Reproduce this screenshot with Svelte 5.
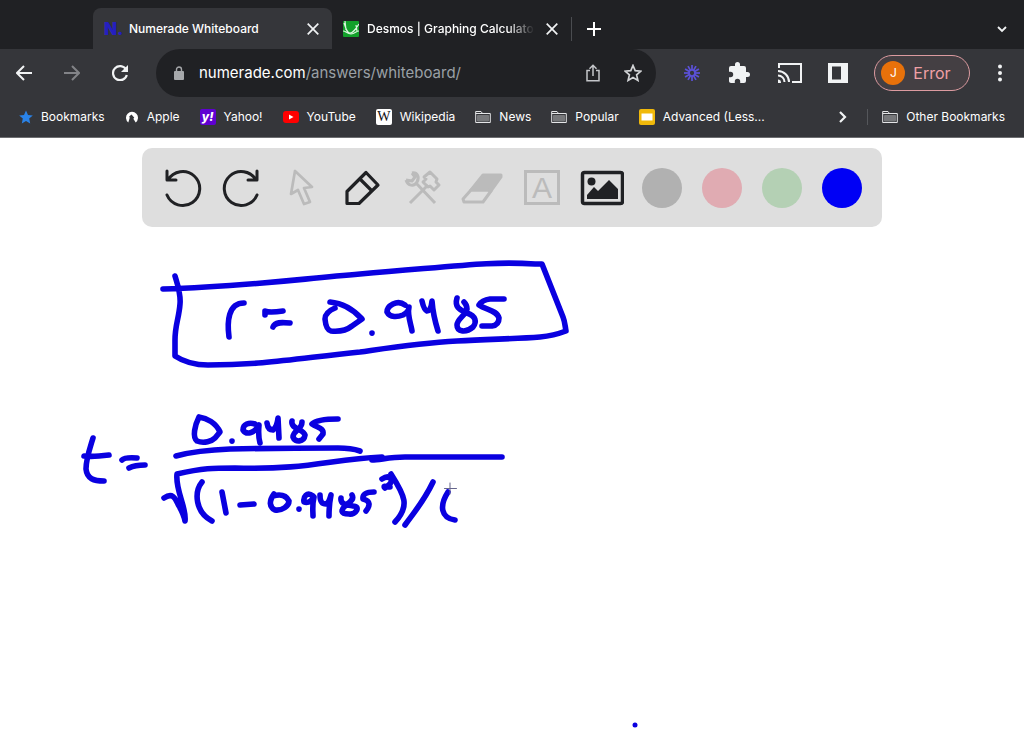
<script lang="ts">
  type Swatch = { name: string, color: string };

  let color = $state("blue");
  let address = $state("numerade.com/answers/whiteboard/");

  const swatches: Swatch[] = [
    { name: "gray", color: "#b1b1b1" },
    { name: "red", color: "#e0abb2" },
    { name: "green", color: "#b4d0b4" },
    { name: "blue", color: "#0000f5" },
  ];

  const bookmarks = [
    { icon: "star", label: "Bookmarks" },
    { icon: "apple", label: "Apple" },
    { icon: "yahoo", label: "Yahoo!" },
    { icon: "youtube", label: "YouTube" },
    { icon: "wiki", label: "Wikipedia" },
    { icon: "folder", label: "News" },
    { icon: "folder", label: "Popular" },
    { icon: "slides", label: "Advanced (Less..." },
  ];

  // pen strokes, in board coordinates
  const result = [
    "M175 276C178 286 181 294 180 304C179 318 175 325 175 340V356C184 362 196 365 208 365C265 365 300 358 360 352C395 347 420 343 457 341C490 339 515 339 540 337C550 336 558 334 566 331C565 326 565 322 563 317L542 264H535C490 261 460 266 360 274C290 280 240 287 163 289",
    "M229 337C227 322 228 303 244 303",
    "M265 315V311Q269 313 283 311",
    "M273 327C275 322 281 322 290 323",
    "M335 308C328 311 325 315 325 319Q326 330 331 331C341 332 347 330 352 326L362 319C352 308 342 303 330 302",
    "M372 333v.1",
    "M405 305C397 299 387 306 387 312C390 318 398 317 403 315C407 313 409 310 409 307C407 315 411 324 412 331",
    "M422 301Q424 310 427 311Q431 311 432 301Q433 315 438 331",
    "M457 298C454 308 461 310 467 313C476 316 477 322 473 327C466 333 457 332 457 325C457 319 466 315 467 309C467 306 466 304 464 302",
    "M504 299H490Q482 300 479 305C486 310 497 310 499 318Q499 325 492 326L482 326",
  ];
  const fraction = [
    "M93 438C90 448 86 459 86 469C87 479 94 481 104 481",
    "M84 456C93 457 101 456 109 455",
    "M122 460Q125 457 137 458",
    "M129 468Q135 465 145 465",
    "M199 417C195 425 192 437 197 441C204 444 212 441 215 438L220 432C216 423 207 418 199 417",
    "M232 441v.1",
    "M255 424C249 422 243 424 243 430C246 435 254 434 259 425Q258 436 260 443",
    "M267 423Q268 430 273 430Q277 427 278 418L279 438",
    "M292 421C290 429 304 429 305 435C304 442 295 443 293 437C293 430 302 430 302 422",
    "M338 419C329 419 316 420 312 424C318 428 324 428 323 434L319 439",
    "M176 456C191 452 205 450 230 449C280 448 320 448 338 448Q351 448 360 451",
    "M164 498C174 491 176 501 179 506Q184 515 185 521C187 508 175 490 177 474C203 468 213 468 235 468C310 470 330 459 382 457",
    "M372 460C380 460 389 457 405 457H502",
    "M202 482C194 492 195 512 212 521",
    "M222 492L226 513",
    "M240 505L254 504",
    "M274 494C269 501 269 507 275 510C282 511 289 506 289 501C286 495 281 494 273 496",
    "M299 509v.1",
    "M313 496C307 491 303 497 304 502C309 504 313 499 314 497C312 505 313 511 313 516",
    "M320 495C320 501 321 504 326 504C329 503 330 498 331 495C329 505 329 511 329 516",
    "M341 498C340 505 348 505 353 506C361 506 356 515 349 514C340 514 341 510 345 506C348 503 355 500 352 495",
    "M374 492Q362 492 363 499C371 501 370 506 366 511",
    "M382 479Q388 475 391 479C393 482 389 485 385 488C382 485 388 487 390 487",
    "M391 474C405 496 410 506 395 522",
    "M433 482C424 501 418 507 405 525",
    "M448 492C439 506 441 518 455 520",
  ];
</script>

<svelte:head>
  <title>Numerade Whiteboard</title>
</svelte:head>

{#snippet folder()}
  <svg width="16" height="14" viewBox="0 0 16 14" fill="none" stroke="#e4e5e7"><path d="M.7 12.5V1.5H6l1.5 2h7.8v9z" /><path d="M2.5 5.5h11V11h-11z" fill="#77787b" stroke="#77787b" /><path d="M.7 3.5H15" /></svg>
{/snippet}

{#snippet close()}
  <svg width="12" height="12" viewBox="0 0 12 12" stroke="#f1f3f4" stroke-width="1.7"><path d="M.7.7l10.6 10.6M11.3.7L.7 11.3" /></svg>
{/snippet}

<div class="window">
  <header>
    <div class="tabs">
      <div class="tab active">
        <span class="logo-n" aria-hidden="true">N.</span>
        <a class="title" href="#board">Numerade Whiteboard</a>
        <button aria-label="Close Numerade Whiteboard">{@render close()}</button>
      </div>
      <div class="tab">
        <svg width="16" height="16" viewBox="0 0 16 16"><rect width="16" height="16" rx="1" fill="#12a02a" /><path d="M1 2C3 8 4 12 7 12S12 9 16 3M2 0l1 9M0 10c3 0 4 3 8 3s5-3 8-3M13 4l1 6" fill="none" stroke="#d9f5dc" stroke-width="1.2" /></svg>
        <a class="title fade" href="#desmos">Desmos | Graphing Calculato</a>
        <button aria-label="Close Desmos">{@render close()}</button>
      </div>
      <button class="new" aria-label="New tab"><svg width="14" height="14" viewBox="0 0 14 14" stroke="#fff" stroke-width="2"><path d="M7 0v14M0 7h14" /></svg></button>
      <button class="search" aria-label="Search tabs"><svg width="10" height="7" viewBox="0 0 10 7" fill="none" stroke="#f1f3f4" stroke-width="1.8"><path d="M1 1l4 4 4-4" /></svg></button>
    </div>

    <div class="toolbar">
      <nav>
        <button aria-label="Back"><svg width="16" height="16" viewBox="0 0 16 16" fill="none" stroke="#f1f3f4" stroke-width="2"><path d="M16 8H1.5M8 1L1 8l7 7" /></svg></button>
        <button aria-label="Forward"><svg width="16" height="16" viewBox="0 0 16 16" fill="none" stroke="#828387" stroke-width="2"><path d="M0 8h14.5M8 1l7 7-7 7" /></svg></button>
        <button aria-label="Reload"><svg width="16" height="16" viewBox="0 0 16 16" fill="none" stroke="#f1f3f4" stroke-width="2.2"><path d="M14 4.5A7 7 0 1 0 14.8 10" /><path d="M16 0v7H9z" fill="#f1f3f4" stroke="none" /></svg></button>
      </nav>

      <div class="omnibox">
        <svg width="12" height="14" viewBox="0 0 12 14"><rect x="1" y="5" width="10" height="9" rx="1" fill="#a6a8ab" /><path d="M3.5 6V3.5a2.5 2.5 0 0 1 5 0V6" fill="none" stroke="#a6a8ab" stroke-width="1.4" /></svg>
        <a class="url" href="#board" aria-label={address}><b>numerade.com</b>/answers/whiteboard/</a>
        <button aria-label="Share"><svg width="14" height="18" viewBox="0 0 14 18" fill="none" stroke="#c4c6c9" stroke-width="1.5"><path d="M4 6.5H1v10.2h12V6.5H10M7 12V1.5M3.5 4.700L7 1.200l3.500 3.500" /></svg></button>
        <button aria-label="Bookmark this page"><svg width="18" height="18" viewBox="0 0 18 18" fill="none" stroke="#d2d4d6" stroke-width="1.7"><path d="M9 1.5l2.2 5.2 5.700.5-4.300 3.700 1.300 5.500L9 13.500l-4.900 2.900 1.300-5.500L1.100 7.200l5.700-.5z" /></svg></button>
      </div>

      <div class="extensions">
        <button aria-label="Loom"><svg width="18" height="18" viewBox="-9 -9 18 18" stroke="#5b51d8" stroke-width="1.7">
          {#each Array(12) as _, i}
            <path d="M0-3V-8" transform="rotate({i * 30})" />
          {/each}
          <circle r="3" fill="none" />
        </svg></button>
        <button aria-label="Extensions"><svg width="24" height="24" viewBox="0 0 24 24" fill="#f1f3f4"><path d="M20.500 11H19V7a2 2 0 0 0-2-2h-4V3.500a2.500 2.500 0 0 0-5 0V5H4a2 2 0 0 0-2 2v3.800h1.500a2.700 2.700 0 0 1 0 5.400H2V20c0 1.100.9 2 2 2h3.800v-1.500a2.700 2.700 0 0 1 5.400 0V22H17a2 2 0 0 0 2-2v-4h1.500a2.500 2.500 0 0 0 0-5z" /></svg></button>
        <button aria-label="Cast"><svg width="26" height="22" viewBox="0 0 26 22" fill="none" stroke="#f1f3f4" stroke-width="2"><path d="M2 6V2h22v18h-9M1 9a11 11 0 0 1 11 11M1 13.500A6.500 6.500 0 0 1 7.500 20" /><path d="M1 17.500A3 3 0 0 1 4 21H1z" fill="#f1f3f4" stroke="none" /></svg></button>
        <button aria-label="Side panel"><svg width="20" height="20" viewBox="0 0 20 20"><path d="M0 0h20v20H0zM4 3.500v13h9v-13z" fill="#f1f3f4" fill-rule="evenodd" /></svg></button>
        <button class="profile"><span>J</span>Error</button>
      </div>
      <button class="menu" aria-label="Menu"><svg width="6" height="18" viewBox="0 0 6 18" fill="#f1f3f4"><circle cx="3" cy="2.500" r="2" /><circle cx="3" cy="9" r="2" /><circle cx="3" cy="15.500" r="2" /></svg></button>
    </div>

    <nav class="bookmarks">
      {#each bookmarks as mark}
        <a href="#{mark.icon}">
          {#if mark.icon === "star"}
            <svg width="14" height="14" viewBox="0 0 14 14" fill="#2a83e8"><path d="M7 .5l2 4.400 4.800.5-3.600 3.200 1 4.800L7 11l-4.200 2.400 1-4.800L.2 5.400 5 4.900z" /></svg>
          {:else if mark.icon === "apple"}
            <svg width="14" height="14" viewBox="0 0 14 14"><path d="M3.300 12.500A6 6 0 1 1 10.700 12.500L8.500 9V7.500L6 6 4.500 8.500z" fill="#fff" /><path d="M5 12.500V8.500L4.200 6.500 6.500 4.500l2.800 3.300-1.300.7L6.500 7.500v5z" fill="#35363a" /></svg>
          {:else if mark.icon === "yahoo"}
            <span class="chip yahoo">y!</span>
          {:else if mark.icon === "youtube"}
            <svg width="16" height="12" viewBox="0 0 16 12"><rect width="16" height="12" rx="3" fill="#f00" /><path d="M6 3.500v5L10.500 6z" fill="#fff" /></svg>
          {:else if mark.icon === "wiki"}
            <span class="chip wiki">W</span>
          {:else if mark.icon === "slides"}
            <svg width="16" height="16" viewBox="0 0 16 16"><rect width="16" height="16" rx="2" fill="#f0b90b" /><path d="M2.500 4.500h11v7h-11z" fill="#fff" /></svg>
          {:else}
            {@render folder()}
          {/if}
          {mark.label}
        </a>
      {/each}
      <button class="more" aria-label="More bookmarks"><svg width="8" height="12" viewBox="0 0 8 12" fill="none" stroke="#f1f3f4" stroke-width="2.200"><path d="M1 1l5 5-5 5" /></svg></button>
      <a class="other" href="#other">{@render folder()}Other Bookmarks</a>
    </nav>
  </header>

  <main id="board">
    <svg class="ink" role="img" aria-label="r ≈ 0.9485, t = 0.9485 over the root of (1 - 0.9485²)/(">
      <g fill="none" stroke="#0a00e0" stroke-width="5.600" stroke-linecap="round" stroke-linejoin="round" transform="translate(0 -138)">
        {#each [...result, ...fraction] as d}
          <path {d} />
        {/each}
        <path d="M635 725v.1" stroke-width="5" />
        <path d="M450 483v11M444.500 488.500h12" stroke="#66668c" stroke-width="1" />
      </g>
    </svg>

    <div class="tools">
      <button aria-label="Undo"><svg width="40" height="40" viewBox="0 0 40 40" fill="none" stroke="#202124" stroke-width="3" stroke-linecap="round" stroke-linejoin="round"><path d="M5 27a17 17 0 1 0 1-15M5 3v9h9" /></svg></button>
      <button aria-label="Redo"><svg width="40" height="40" viewBox="0 0 40 40" fill="none" stroke="#202124" stroke-width="3" stroke-linecap="round" stroke-linejoin="round"><path d="M35 27a17 17 0 1 1-1-15M35 3v9H26" /></svg></button>
      <button aria-label="Select"><svg width="40" height="40" viewBox="0 0 40 40" fill="none" stroke="#bbb" stroke-width="2.700" stroke-linejoin="round"><path d="M13 3L9 26l7-4 6 14 6-2-6-14 8-1z" /></svg></button>
      <button aria-label="Pen"><svg width="40" height="40" viewBox="0 0 40 40" fill="none" stroke="#202124" stroke-width="3.200" stroke-linejoin="round"><path d="M5 35.500V23.500L24 4.500 36 17 17 35.500zM18 11l12 12" /></svg></button>
      <button aria-label="Tools"><svg width="40" height="40" viewBox="0 0 40 40" fill="none" stroke="#bbb" stroke-width="3" stroke-linejoin="round"><path d="M8 35L26 17M33 35L14 15M10 5c5-1 8 4 5 9s-9 4-11-2M10 5l3 4-3 4-6-1" /><path d="M22 9l6-5 7 7-1 3 3 3-5 5-4-4-2 1-5-5 3-3z" /></svg></button>
      <button aria-label="Eraser"><svg width="44" height="40" viewBox="0 0 44 40" fill="none" stroke="#bbb" stroke-width="3" stroke-linejoin="round"><path d="M11 22h17l3 1-8 11H4l-1-3z" /><path d="M11 22L23 7h18v2L31 23l-3-1z" fill="#bbb" /></svg></button>
      <button class="text" aria-label="Text"><span>A</span></button>
      <button aria-label="Image"><svg width="44" height="36" viewBox="0 0 44 36"><rect x="2.500" y="2.500" width="40" height="31" rx="2" fill="none" stroke="#202124" stroke-width="3.500" /><circle cx="11.500" cy="11.500" r="4" fill="#202124" /><path d="M7 29v-4l7-8 4 4L29 10l9 9v10z" fill="#202124" /></svg></button>
      {#each swatches as s}
        <button class="swatch" aria-label={s.name} aria-pressed={color === s.name} style="background: {s.color}" onclick={() => (color = s.name)}></button>
      {/each}
    </div>
  </main>
</div>

<style>
  :global(body) {
    margin: 0;
    background: #fff;
  }

  .window {
    min-height: 100vh;
    display: flex;
    flex-direction: column;
    font: 400 12px/16px Inter, "Liberation Sans", sans-serif;
    color: #fff;
    overflow: hidden;
  }

  header {
    background: #35363a;
    border-bottom: 1px solid #6d6e71;
  }

  button {
    display: flex;
    align-items: center;
    justify-content: center;
    flex: none;
    padding: 0;
    border: 0;
    background: none;
    font: inherit;
    color: inherit;
  }

  a {
    color: inherit;
    text-decoration: none;
  }

  svg {
    display: block;
    flex: none;
  }

  .tabs {
    display: flex;
    align-items: flex-end;
    background: #202124;
    height: 49px;
    padding-left: 93px;
  }

  .tab {
    display: flex;
    align-items: center;
    box-sizing: border-box;
    height: 41px;
    width: 239px;
    padding: 0 13px 0 11px;
    gap: 8px;
  }

  .tab.active {
    background: #35363a;
    border-radius: 8px 8px 0 0;
  }

  .title {
    flex: 1;
    font-weight: 500;
    white-space: nowrap;
  }

  .fade {
    mask-image: linear-gradient(to right, #000 82%, transparent 98%);
  }

  .logo-n {
    width: 17px;
    font: 900 17px/20px Inter, sans-serif;
    color: #251fc0;
  }

  .new {
    height: 24px;
    margin-bottom: 8px;
    padding-left: 15px;
    border-left: 1px solid #4a4c50;
  }

  .search {
    margin: 0 17px 16px auto;
  }

  .toolbar {
    display: flex;
    align-items: center;
    height: 48px;
  }

  .toolbar nav {
    display: flex;
    gap: 32px;
    width: 140px;
    padding-left: 16px;
  }

  .omnibox {
    flex: 1;
    display: flex;
    align-items: center;
    gap: 24px;
    height: 48px;
    box-sizing: border-box;
    padding: 0 14px 0 17px;
    border-radius: 24px;
    background: #202124;
  }

  .url {
    flex: 1;
    margin-left: -10px;
    font: 400 15px/20px Inter, sans-serif;
    color: #9aa0a6;
  }

  .url b {
    font-weight: 400;
    color: #fff;
  }

  .extensions {
    display: flex;
    align-items: center;
    justify-content: space-between;
    box-sizing: border-box;
    width: 314px;
    padding-left: 27px;
  }

  .profile {
    gap: 8px;
    box-sizing: border-box;
    height: 36px;
    width: 96px;
    padding: 0 12px 0 0;
    border: 1px solid #dc9ba0;
    border-radius: 18px;
    background: #443f43;
    color: #f0a0a6;
    font: 400 16px/20px Inter, sans-serif;
  }

  .profile span {
    width: 24px;
    border-radius: 50%;
    background: #e8710a;
    color: #fff;
    font-size: 12px;
    line-height: 24px;
  }

  .menu {
    width: 54px;
    padding-left: 6px;
  }

  .bookmarks {
    display: flex;
    align-items: center;
    gap: 20px;
    height: 40px;
    padding: 0 19px;
  }

  .bookmarks a {
    display: flex;
    align-items: center;
    gap: 8px;
    white-space: nowrap;
  }

  .chip {
    width: 16px;
    border-radius: 2px;
    text-align: center;
  }

  .yahoo {
    background: #5f01d1;
    font-weight: 800;
    font-style: italic;
  }

  .wiki {
    background: #fff;
    color: #111;
    font-family: "Liberation Serif", serif;
    font-size: 14px;
  }

  .more {
    margin-left: auto;
  }

  .bookmarks .other {
    padding-left: 14px;
    border-left: 1px solid #55575b;
  }

  main {
    flex: 1;
    position: relative;
    background: #fff;
  }

  /* drawing surface covers the whole board */
  .ink {
    position: absolute;
    inset: 0;
    width: 100%;
    height: 100%;
  }

  .tools {
    position: relative;
    display: flex;
    align-items: center;
    justify-content: space-between;
    box-sizing: border-box;
    width: 740px;
    max-width: 100%;
    height: 79px;
    margin: 10px auto 0;
    padding: 0 20px;
    border-radius: 10px;
    background: #dedede;
  }

  .tools button {
    width: 40px;
    height: 40px;
  }

  .text span {
    width: 30px;
    border: 3px solid #bbb;
    color: #bbb;
    font: 500 30px/29px "Liberation Sans", sans-serif;
  }

  .tools .swatch {
    border-radius: 50%;
  }
</style>
